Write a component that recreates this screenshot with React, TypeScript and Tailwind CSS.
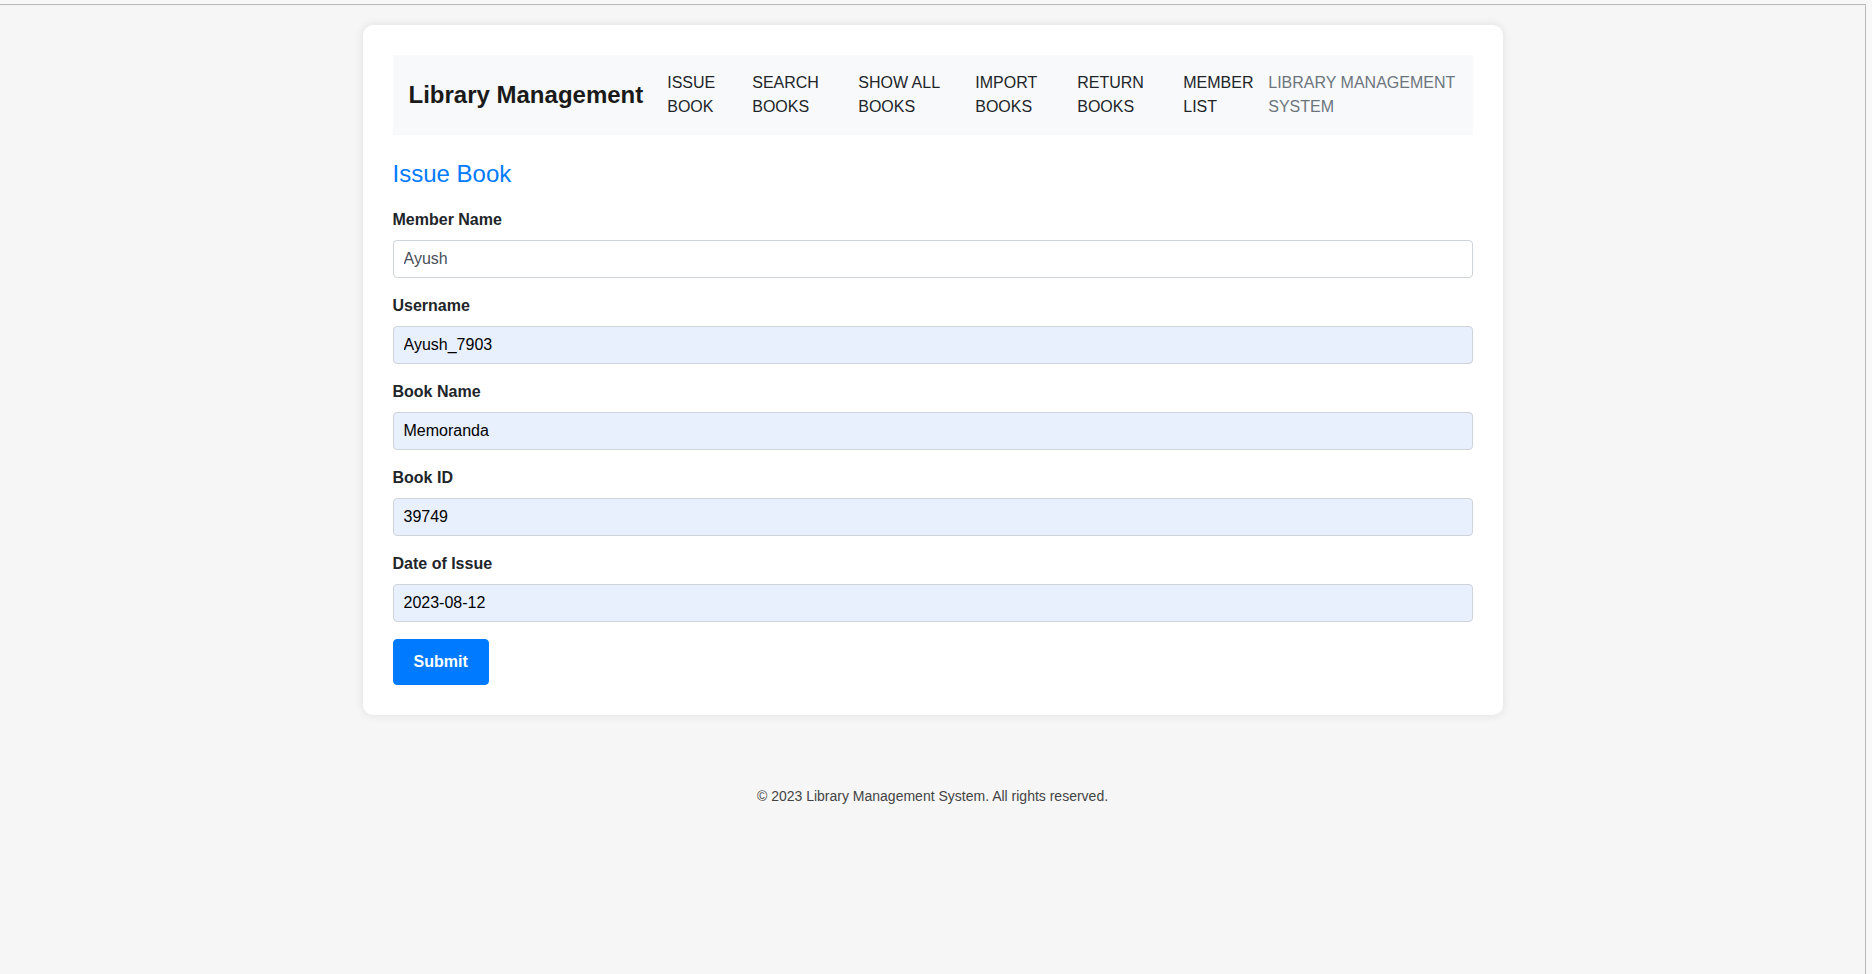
import React from 'react';

const navLinks = [
  { label: 'ISSUE BOOK', width: 'w-[85px]' },
  { label: 'SEARCH BOOKS', width: 'w-[106px]' },
  { label: 'SHOW ALL BOOKS', width: 'w-[117px]' },
  { label: 'IMPORT BOOKS', width: 'w-[102px]' },
  { label: 'RETURN BOOKS', width: 'w-[106px]' },
  { label: 'MEMBER LIST', width: 'w-[85px]' },
];

const fields = [
  { label: 'Member Name', value: 'Ayush', filled: false },
  { label: 'Username', value: 'Ayush_7903', filled: true },
  { label: 'Book Name', value: 'Memoranda', filled: true },
  { label: 'Book ID', value: '39749', filled: true },
  { label: 'Date of Issue', value: '2023-08-12', filled: true },
];

const Navbar = () => (
  <nav className="flex items-center h-[80px] bg-[#f8f9fa] pl-4 mb-6">
    <a className="mr-4 text-[24px] font-bold leading-[1.2] text-[#1a1a1a] whitespace-nowrap">
      Library Management
    </a>
    <ul className="flex items-center">
      {navLinks.map((link) => (
        <li key={link.label} className={link.width}>
          <a className="block px-2 text-[16px] leading-6 text-[#212529]">{link.label}</a>
        </li>
      ))}
      <li className="w-[204px]">
        <span className="block px-2 text-[16px] leading-6 text-[#6c757d]">LIBRARY MANAGEMENT SYSTEM</span>
      </li>
    </ul>
  </nav>
);

export default function App() {
  return (
    <div className="min-h-[974px] bg-[#f8f8f8] pt-1 font-['Liberation_Sans',Arial,sans-serif]">
      <div className="w-[1866px] min-h-[970px] border-t border-r border-[#b9b9b9] bg-[#f6f6f6] pt-5">
        <div className="mx-auto w-[1140px] rounded-[10px] bg-white p-[30px] shadow-[0_0_10px_rgba(0,0,0,0.1)]">
          <Navbar />

          {/* heading sits a pixel lower than the h2 default */}
          <h2 className="pt-px mb-[19px] text-[24px] leading-[1.2] text-[#007bff]">Issue Book</h2>

          <form>
            {fields.map((f) => (
              <div key={f.label} className="mb-4">
                <label className="block mb-2 text-[16px] leading-6 font-bold text-[#212529]">{f.label}</label>
                <input
                  readOnly
                  value={f.value}
                  className={
                    f.filled
                      ? 'block w-full h-[38px] px-[10px] rounded border border-[#ced4da] bg-[#e8f0fe] text-[16px] text-black outline-none'
                      : 'block w-full h-[38px] px-[10px] rounded border border-[#ced4da] bg-white text-[16px] text-[#495057] outline-none'
                  }
                />
              </div>
            ))}
            <button
              type="button"
              className="mt-px rounded border border-[#007bff] bg-[#007bff] px-5 py-[10px] text-[16px] leading-6 font-bold text-white"
            >
              Submit
            </button>
          </form>
        </div>

        <footer className="mt-[71px] text-center text-[14px] leading-[21px] text-[#444]">
          © 2023 Library Management System. All rights reserved.
        </footer>
      </div>
    </div>
  );
}
